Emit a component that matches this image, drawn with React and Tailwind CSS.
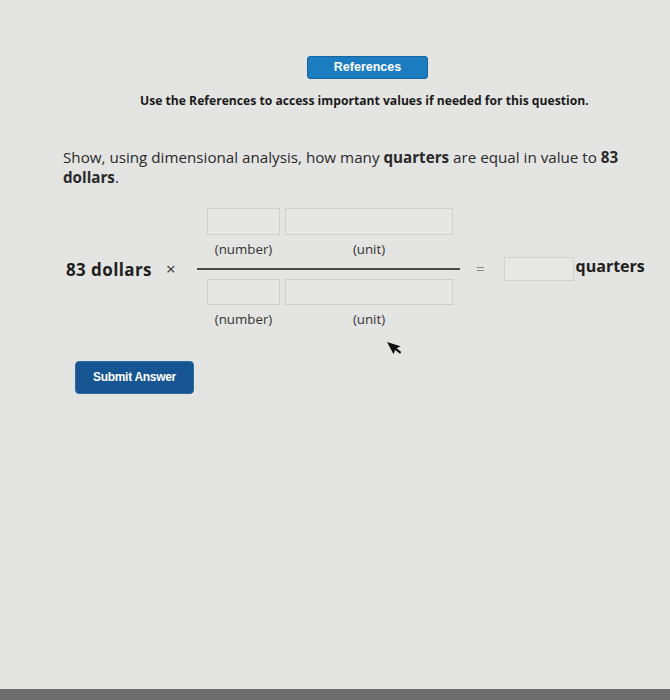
export default function App() {
  const sans = { fontFamily: '"Open Sans", "Noto Sans", sans-serif' };
  const btn = { fontFamily: '"Liberation Sans", Arial, sans-serif' };
  return (
    <div className="relative w-[670px] h-[700px] overflow-hidden bg-[#e4e4e2] text-[#1e1e1e]" style={sans}>
      <div className="flex flex-col h-full">
        <div className="flex pl-[307px] pt-[56px]">
          <button className="w-[121px] h-[23px] rounded-[3px] bg-[#1b7cc0] border border-[#16679f] text-white text-[12.5px] font-bold" style={btn}>
            References
          </button>
        </div>
        <p className="ml-[140px] mt-[13px] text-[12.15px] font-bold leading-[18px] text-[#1a1a1a]">
          Use the References to access important values if needed for this question.
        </p>
        <p className="ml-[63px] mt-[37px] w-[580px] text-[15.2px] leading-[20px] text-[#2a2a2a]">
          Show, using dimensional analysis, how many <b>quarters</b> are equal in value to <b>83</b> <b>dollars</b>.
        </p>
        <div className="flex items-start ml-[66px] mt-[21px]">
          <div className="w-[100px] mt-[51px] text-[17px] font-bold leading-[22px] tracking-[0.4px] whitespace-nowrap">83 dollars</div>
          <div className="w-[14px] mt-[51px] text-[17px] leading-[20px] text-[#333]">×</div>
          <div className="ml-[17px] w-[263px] flex flex-col">
            <div className="flex gap-[5px] pl-[10px]">
              <div className="flex flex-col items-center">
                <div className="w-[73px] h-[27px] border border-[#cfcfcd] bg-[#e6e6e4]" />
                <div className="mt-[6px] text-[13.3px] leading-[16px] text-[#333]">(number)</div>
              </div>
              <div className="flex flex-col items-center">
                <div className="w-[168px] h-[27px] border border-[#cfcfcd] bg-[#e6e6e4]" />
                <div className="mt-[6px] text-[13.3px] leading-[16px] text-[#333]">(unit)</div>
              </div>
            </div>
            <div className="mt-[11px] h-[1.5px] bg-[#4a4a4a]" />
            <div className="flex gap-[5px] pl-[10px] mt-[9px]">
              <div className="flex flex-col items-center">
                <div className="w-[73px] h-[26px] border border-[#cfcfcd] bg-[#e6e6e4]" />
                <div className="mt-[6px] text-[13.3px] leading-[16px] text-[#333]">(number)</div>
              </div>
              <div className="flex flex-col items-center">
                <div className="w-[168px] h-[26px] border border-[#cfcfcd] bg-[#e6e6e4]" />
                <div className="mt-[6px] text-[13.3px] leading-[16px] text-[#333]">(unit)</div>
              </div>
            </div>
          </div>
          <div className="mt-[50px] ml-[16px] text-[15px] leading-[20px] text-[#888]">=</div>
          <div className="mt-[49px] ml-[19px] w-[70px] h-[24px] border border-[#d2d2d0] bg-[#e7e7e5]" />
          <div className="mt-[48px] ml-[2px] text-[16px] font-bold leading-[20px] whitespace-nowrap">quarters</div>
        </div>
        <div className="flex ml-[75px] mt-[34px]">
          <button className="w-[119px] h-[33px] rounded-[4px] bg-[#175592] border border-[#2f6aa3] text-white text-[12px] font-bold tracking-[-0.3px]" style={btn}>
            Submit Answer
          </button>
        </div>
        <div className="flex-1" />
        <div className="h-[11px] bg-[#6e6e6e]" />
      </div>
      <svg className="absolute left-[383px] top-[340px]" width="18" height="22" viewBox="0 0 18 22">
        <path d="M4 2 L4 16 L7.5 12.8 L10 18.5 L12 17.6 L9.6 12 L14 12 Z" fill="#111" transform="rotate(-28 4 2)" />
      </svg>
    </div>
  );
}
